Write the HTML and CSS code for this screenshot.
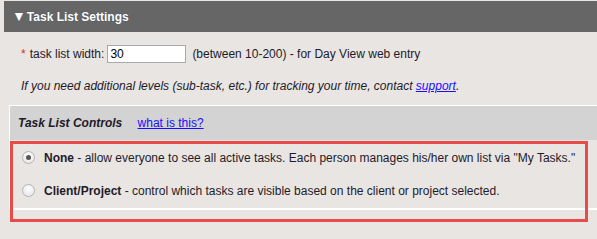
FILE: index.html
```html
<!DOCTYPE html>
<html lang="en">
<head>
    <title>Task List Settings</title>
    <meta charset="utf-8">
    <link rel="stylesheet" href="styles.css">
</head>
<body>
<div class="settings">
    <div class="section-head"><span class="arrow">&#9660;</span>Task List Settings</div>
    <div class="width-row">
        <span class="req">*</span>
        <span class="label">task list width:</span>
        <input class="width-input" type="text" value="30">
        <span class="hint">(between 10-200) - for Day View web entry</span>
    </div>
    <div class="note">If you need additional levels (sub-task, etc.) for tracking your time, contact <a href="#">support</a>.</div>
    <div class="panel">
        <div class="panel-head">
            <span class="panel-title">Task List Controls</span>
            <a href="#">what is this?</a>
        </div>
        <div class="options">
            <label class="option"><input type="radio" name="ctl" checked><b>None</b>&nbsp;- allow everyone to see all active tasks. Each person manages his/her own list via "My Tasks."</label>
            <label class="option"><input type="radio" name="ctl"><b>Client/Project</b>&nbsp;- control which tasks are visible based on the client or project selected.</label>
            <div class="mark"></div>
        </div>
    </div>
</div>
</body>
</html>
```

FILE: styles.css
```css
html, body {
    min-height: 239px;
}
body {
    margin: 0;
    background: #e8e5e2;
    font-family: "Liberation Sans", Arial, sans-serif;
    font-size: 12px;
    color: #1e1b2a;
}
.settings {
    padding: 1px 0 0 4px;
}
.section-head {
    background: #666;
    color: #fff;
    font-weight: bold;
    font-size: 12px;
    height: 31px;
    line-height: 31px;
    padding-left: 8px;
    text-shadow: 0 0 1px #3a4a5a;
}
.arrow {
    font-size: 14px;
    margin-right: 1px;
}
.width-row {
    display: flex;
    align-items: center;
    padding: 13px 0 0 17px;
    height: 18px;
}
.req {
    color: #e0302a;
    margin-right: 4px;
}
.width-input {
    box-sizing: border-box;
    width: 79px;
    height: 18px;
    margin: 0 6px 0 3px;
    padding: 0 2px;
    border: 1px solid #a9a9a9;
    font: 12px "Liberation Sans", Arial, sans-serif;
    color: #000;
}
.note {
    font-style: italic;
    padding: 14px 0 0 17px;
    height: 18px;
    line-height: 18px;
}
a {
    color: #1a0dff;
}
.panel {
    margin: 10px 0 0 5px;
    border-top: 1px solid #fff;
    border-left: 1px solid #fff;
    border-bottom: 2px solid #fff;
}
.panel-head {
    background: #d3d3d3;
    height: 34px;
    line-height: 34px;
    padding-left: 8px;
}
.panel-title {
    font-weight: bold;
    font-style: italic;
    margin-right: 12px;
}
.options {
    position: relative;
    height: 67px;
    padding-left: 11px;
}
.option {
    display: flex;
    align-items: center;
    height: 33px;
    white-space: nowrap;
}
.option:first-child {
    margin-top: 1px;
}
.option input {
    appearance: none;
    -webkit-appearance: none;
    box-sizing: border-box;
    width: 13px;
    height: 13px;
    margin: 0 9px 0 1px;
    border: 1px solid #b4b4b4;
    border-radius: 50%;
    background: radial-gradient(circle at 50% 35%, #fff, #e2e2e2);
    position: relative;
}
.option input:checked::after {
    content: "";
    position: absolute;
    left: 3px;
    top: 3px;
    width: 5px;
    height: 5px;
    border-radius: 50%;
    background: #555;
}
.mark {
    position: absolute;
    left: 0;
    top: 0;
    width: 572px;
    height: 75px;
    border: 3px solid #e84c48;
}
```
